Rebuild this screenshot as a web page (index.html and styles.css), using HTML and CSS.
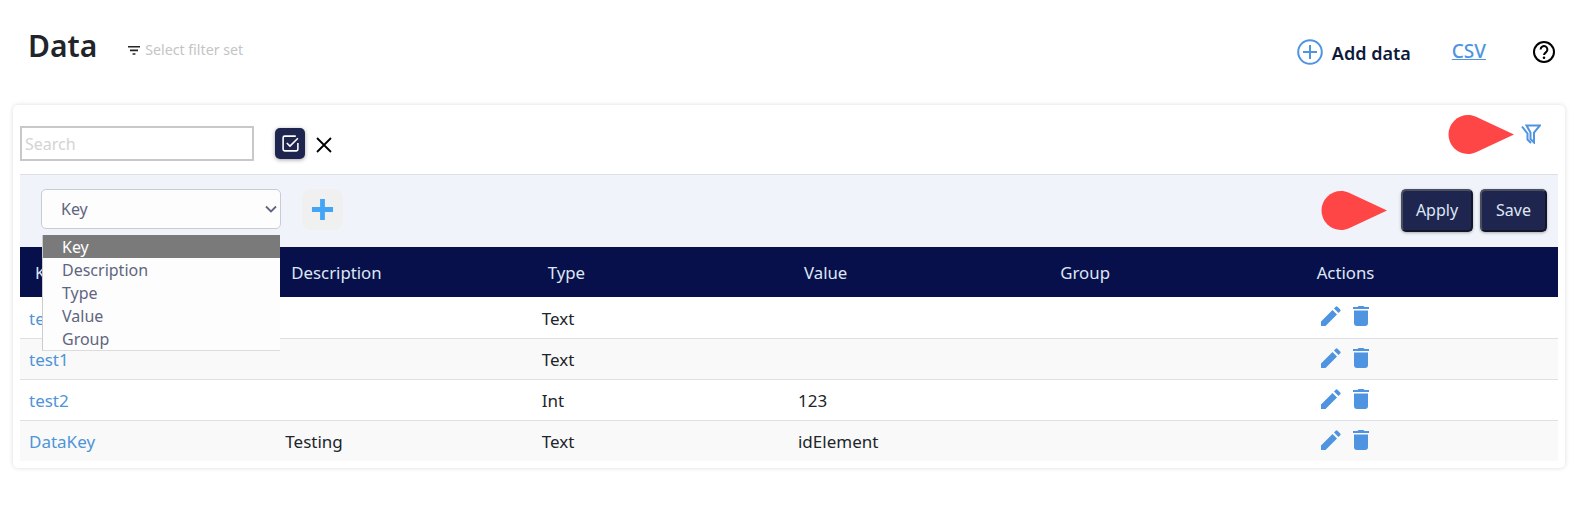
FILE: index.html
```html
<!DOCTYPE html>
<html lang="en">
<head>
<meta charset="utf-8">
<title>Data</title>
<link rel="stylesheet" href="styles.css">
</head>
<body>
<header class="page-head">
  <h1 class="title">Data</h1>
  <div class="filter-set">
    <svg class="filter-set-icon" viewBox="0 0 12 9"><path d="M0 0h12v1.6H0zM2 3.6h8v1.6H2zM4.6 7.2h2.8v1.6H4.6z"/></svg>
    <span>Select filter set</span>
  </div>
  <div class="head-actions">
    <a class="add-data">
      <svg class="add-icon" viewBox="0 0 26 26"><circle cx="13" cy="13" r="11.8"/><path d="M13 6v14M6 13h14"/></svg>
      <span>Add data</span>
    </a>
    <a class="csv">CSV</a>
    <svg class="help-icon" viewBox="0 0 24 24"><circle cx="12" cy="12" r="10"/><path class="q" d="M8.6 9.4a3.4 3.4 0 1 1 5.5 2.7c-1.3 1-2.1 1.6-2.1 3"/><circle class="dot" cx="12" cy="17.7" r="1.3"/></svg>
  </div>
</header>

<main class="card">
  <div class="search-row">
    <div class="search">Search</div>
    <button class="check-btn">
      <svg viewBox="0 0 18 18"><path d="M16 8.500v6A1.500 1.500 0 0 1 14.500 16h-11A1.500 1.500 0 0 1 2 14.500v-11A1.500 1.500 0 0 1 3.500 2H14"/><path d="M5.500 8.500l3 3L16 4"/></svg>
    </button>
    <svg class="close-icon" viewBox="0 0 16 16"><path d="M1 1l14 14M15 1L1 15"/></svg>
    <svg class="funnel" viewBox="0 0 20 20"><path d="M5.500 1.500h13.500l-6 7v10l-3.500-3.500v-6.500z"/><path d="M1 2.500l5.500 7v6l3.500 3.500"/></svg>
  </div>

  <div class="filter-row">
    <div class="select">
      <span>Key</span>
      <svg class="chevron" viewBox="0 0 12 8"><path d="M1 1.500l5 5 5-5"/></svg>
    </div>
    <button class="plus-btn">
      <svg viewBox="0 0 24 24"><path d="M9.500 1h5v8.500H23v5h-8.500V23h-5v-8.500H1v-5h8.500z"/></svg>
    </button>
    <div class="filter-buttons">
      <button class="dark-btn apply">Apply</button>
      <button class="dark-btn save">Save</button>
    </div>
  </div>

  <table class="data-table">
    <thead>
      <tr><th>Key</th><th>Description</th><th>Type</th><th>Value</th><th>Group</th><th>Actions</th></tr>
    </thead>
    <tbody>
      <tr><td><a>test</a></td><td></td><td>Text</td><td></td><td></td><td class="acts"><svg class="ico" viewBox="0 0 20 20"><path d="M0 20v-4.500L11.500 4l4.500 4.500L4.500 20zM13 2.500 14.700.8a1.300 1.300 0 0 1 1.800 0l2.700 2.700a1.300 1.300 0 0 1 0 1.800L17.500 7z"/></svg><svg class="ico trash" viewBox="0 0 16 20"><path d="M5.500 0h5l1 1H16v2H0V1h4.500zM1 4.500h14V17a3 3 0 0 1-3 3H4a3 3 0 0 1-3-3z"/></svg></td></tr>
      <tr><td><a>test1</a></td><td></td><td>Text</td><td></td><td></td><td class="acts"><svg class="ico" viewBox="0 0 20 20"><path d="M0 20v-4.500L11.500 4l4.500 4.500L4.500 20zM13 2.500 14.700.8a1.300 1.300 0 0 1 1.800 0l2.700 2.700a1.300 1.300 0 0 1 0 1.800L17.500 7z"/></svg><svg class="ico trash" viewBox="0 0 16 20"><path d="M5.500 0h5l1 1H16v2H0V1h4.500zM1 4.500h14V17a3 3 0 0 1-3 3H4a3 3 0 0 1-3-3z"/></svg></td></tr>
      <tr><td><a>test2</a></td><td></td><td>Int</td><td>123</td><td></td><td class="acts"><svg class="ico" viewBox="0 0 20 20"><path d="M0 20v-4.500L11.500 4l4.500 4.500L4.500 20zM13 2.500 14.700.8a1.300 1.300 0 0 1 1.800 0l2.700 2.700a1.300 1.300 0 0 1 0 1.800L17.500 7z"/></svg><svg class="ico trash" viewBox="0 0 16 20"><path d="M5.500 0h5l1 1H16v2H0V1h4.500zM1 4.500h14V17a3 3 0 0 1-3 3H4a3 3 0 0 1-3-3z"/></svg></td></tr>
      <tr><td><a>DataKey</a></td><td>Testing</td><td>Text</td><td>idElement</td><td></td><td class="acts"><svg class="ico" viewBox="0 0 20 20"><path d="M0 20v-4.500L11.500 4l4.500 4.500L4.500 20zM13 2.500 14.700.8a1.300 1.300 0 0 1 1.800 0l2.700 2.700a1.300 1.300 0 0 1 0 1.800L17.500 7z"/></svg><svg class="ico trash" viewBox="0 0 16 20"><path d="M5.500 0h5l1 1H16v2H0V1h4.500zM1 4.500h14V17a3 3 0 0 1-3 3H4a3 3 0 0 1-3-3z"/></svg></td></tr>
    </tbody>
  </table>

  <ul class="options">
    <li class="selected">Key</li>
    <li>Description</li>
    <li>Type</li>
    <li>Value</li>
    <li>Group</li>
  </ul>

  <svg class="pin pin-funnel" viewBox="0 0 66 39"><path d="M20 0c3 0 5 .6 8 1.800L66 19.500 28 37.200c-3 1.200-5 1.800-8 1.800A19.500 19.500 0 0 1 20 0z"/></svg>
  <svg class="pin pin-apply" viewBox="0 0 66 39"><path d="M20 0c3 0 5 .6 8 1.800L66 19.500 28 37.200c-3 1.200-5 1.800-8 1.800A19.500 19.500 0 0 1 20 0z"/></svg>
</main>
</body>
</html>
```
FILE: styles.css
```css
* { box-sizing: border-box; }
html, body { margin: 0; padding: 0; }
body {
  width: 1579px;
  height: 525px;
  overflow: hidden;
  background: #fff;
  color: #212529;
  font-family: "Noto Sans", "Open Sans", sans-serif;
  font-size: 16px;
}
.page-head {
  display: flex;
  align-items: flex-start;
  height: 105px;
  padding: 26px 23px 0 28px;
}
.title {
  margin: 0;
  font-size: 30px;
  line-height: 40px;
  font-weight: 600;
  color: #212529;
}
.filter-set {
  display: flex;
  align-items: center;
  gap: 5px;
  margin: 14px 0 0 31px;
  font-size: 14.200px;
  line-height: 20px;
  color: #c4c4c4;
}
.filter-set-icon { width: 12px; height: 9px; fill: #212529; }
.head-actions {
  display: flex;
  align-items: center;
  margin-left: auto;
  margin-top: 12px;
}
.add-data {
  display: flex;
  align-items: center;
  gap: 9px;
  margin-top: 2px;
  font-size: 18px;
  font-weight: 600;
  color: #0e1a3a;
}
.add-icon { width: 26px; height: 26px; margin-top: -3px; fill: none; stroke: #4e94e0; stroke-width: 2; }
.csv {
  margin-left: 41px;
  margin-bottom: 2px;
  font-size: 19px;
  font-weight: 500;
  color: #4e94e0;
  text-decoration: underline;
}
.help-icon { width: 24px; height: 24px; margin-left: 46px; fill: none; stroke: #000; stroke-width: 2; }
.help-icon .dot { fill: #000; stroke: none; }

.card {
  position: relative;
  width: 1552px;
  height: 363px;
  margin-left: 13px;
  padding: 0 7px;
  background: #fff;
  border-radius: 5px;
  box-shadow: 0 0 5px rgba(0, 0, 0, .14);
}
.search-row {
  display: flex;
  align-items: flex-start;
  height: 70px;
  padding-top: 21px;
  border-bottom: 1px solid #dcdfe8;
}
.search {
  width: 234px;
  height: 35px;
  padding: 1px 0 0 3px;
  border: 2px solid #c8c8c8;
  color: #d3d3d3;
  font-size: 16px;
  line-height: 30px;
}
.check-btn {
  display: flex;
  align-items: center;
  justify-content: center;
  width: 30px;
  height: 31px;
  margin: 2px 0 0 21px;
  padding: 0;
  border: 0;
  border-radius: 5px;
  background: #1e2650;
  box-shadow: 0 1px 4px rgba(0, 0, 0, .35);
}
.check-btn svg { width: 19px; height: 19px; fill: none; stroke: #fff; stroke-width: 1.500; }
.close-icon { width: 16px; height: 16px; margin: 11px 0 0 11px; fill: none; stroke: #000; stroke-width: 1.800; }
.funnel { width: 20px; height: 20px; margin: -2px 17px 0 auto; fill: none; stroke: #4e94e0; stroke-width: 2; }

.filter-row {
  display: flex;
  align-items: flex-start;
  height: 72px;
  padding: 14px 11px 0 21px;
  background: #f0f3fa;
}
.select {
  display: flex;
  align-items: center;
  justify-content: space-between;
  width: 240px;
  height: 40px;
  padding: 0 3px 1px 19px;
  border: 1px solid #c8ccd6;
  border-radius: 5px;
  background: #fdfdfd;
  color: #5f6580;
  font-size: 16px;
}
.chevron { width: 12px; height: 8px; margin-top: 1px; fill: none; stroke: #5f6580; stroke-width: 1.800; }
.plus-btn {
  display: flex;
  align-items: center;
  justify-content: center;
  width: 41px;
  height: 41px;
  margin-left: 21px;
  padding: 0;
  border: 0;
  border-radius: 9px;
  background: #f0f0f0;
}
.plus-btn svg { width: 23px; height: 23px; fill: #42a5f5; }
.filter-buttons { display: flex; gap: 7px; margin-left: auto; }
.dark-btn {
  height: 43px;
  padding: 0 0 2px;
  border: 2px solid #4a4f60;
  border-bottom-color: #14172a;
  border-right-color: #14172a;
  border-radius: 5px;
  background: #1e2650;
  color: #dfe6f5;
  font-family: inherit;
  font-size: 16px;
  box-shadow: 0 1px 3px rgba(0, 0, 0, .3);
}
.apply { width: 72px; }
.save { width: 67px; }

.data-table {
  width: 1538px;
  border-collapse: collapse;
  table-layout: fixed;
  font-size: 17px;
}
.data-table th {
  height: 50px;
  padding: 1px 0 0 15px;
  background: #07104a;
  color: #dfe6f5;
  font-size: 16.800px;
  font-weight: 400;
  text-align: left;
}
.data-table td {
  height: 41px;
  padding: 2px 0 0 9px;
  border-bottom: 1px solid #dfe0e6;
  color: #212529;
}
.data-table tr:last-child td { border-bottom: 0; }
.data-table tbody tr:nth-child(even) td { background: #f9f9f9; }
.data-table a { color: #4e94d8; }
.data-table .acts { padding: 0 0 2px 19px; line-height: 0; }
.ico { display: inline-block; width: 20px; height: 20px; fill: #4e94e0; vertical-align: middle; }
.ico.trash { width: 16px; margin-left: 12px; }

.options {
  position: absolute;
  left: 29px;
  top: 130px;
  width: 238px;
  margin: 0;
  padding: 0;
  list-style: none;
  background: #fdfdfd;
  border-left: 1px solid #ccc;
  border-bottom: 1px solid #dcdcdc;
  color: #5f6580;
  font-size: 16px;
  line-height: 23px;
}
.options li { height: 23px; padding: 1px 0 0 19px; }
.options .selected { background: #7a7a7a; color: #fff; }

.pin { position: absolute; width: 66px; height: 39px; fill: #ff4646; }
.pin-funnel { left: 1435px; top: 10px; }
.pin-apply { left: 1308px; top: 86px; }
```
